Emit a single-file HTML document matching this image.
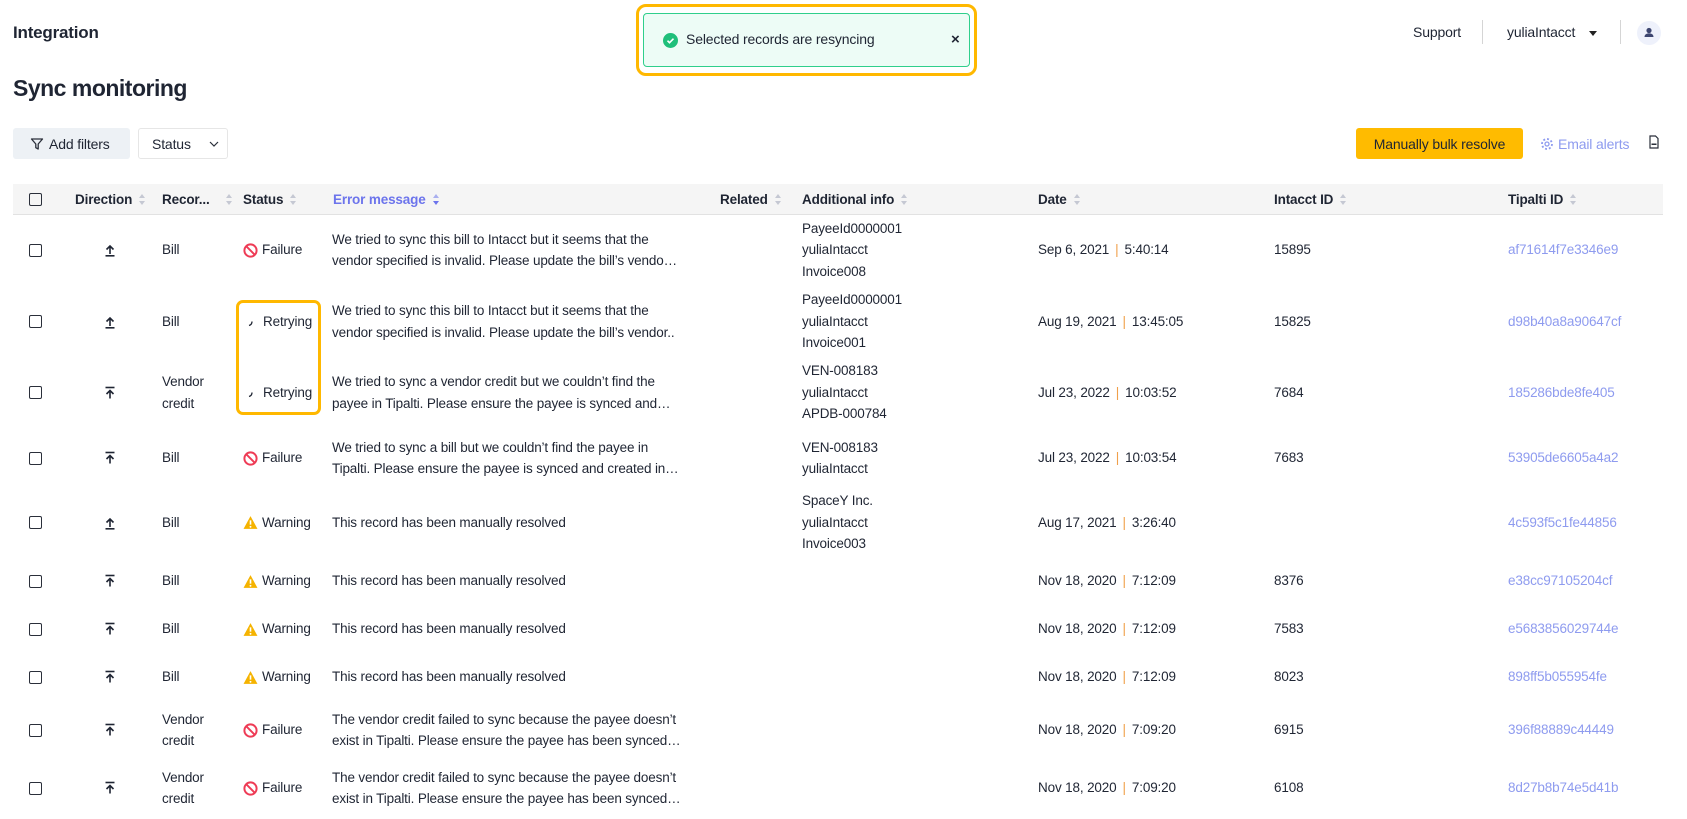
<!DOCTYPE html>
<html><head><meta charset="utf-8">
<style>
*{box-sizing:border-box;margin:0;padding:0}
body{width:1687px;height:819px;overflow:hidden;background:#fff;font-family:"Liberation Sans",sans-serif;color:#1f2533;font-size:13.5px;letter-spacing:-0.15px;position:relative}
.abs{position:absolute}
.h1{left:13px;top:23px;font-size:17px;font-weight:bold;letter-spacing:-0.2px}
.h2{left:13px;top:75px;font-size:23px;font-weight:bold;letter-spacing:-0.5px}
.btn{position:absolute;top:128px;height:31px;display:flex;align-items:center;font-size:14px;border-radius:3px}
.thead{position:absolute;left:13px;top:184px;width:1650px;height:31px;background:#f5f5f5;border-bottom:1.5px solid #e2e2e2}
.th{position:absolute;top:0;height:31px;display:flex;align-items:center;font-weight:bold;font-size:13.5px;white-space:nowrap}
.sort{display:inline-block;margin-left:7px;width:7px;height:11px;position:relative}
.sort:before,.sort:after{content:"";position:absolute;left:0;border-left:3.5px solid transparent;border-right:3.5px solid transparent}
.sort:before{top:0;border-bottom:4px solid #c5c8d3}
.sort:after{bottom:0;border-top:4px solid #c5c8d3}
.sort.act:before{border-bottom-color:#a9afef}.sort.act:after{border-top-color:#6c74ec}
.row{position:absolute;left:0;width:1687px}
.c{position:absolute;top:0;height:100%;display:flex;align-items:center;white-space:nowrap;line-height:21.5px}
.cb{width:13px;height:13px;border:1.6px solid #2a2f3a;border-radius:2px}
.link{color:#8e9bef}
.sep{color:#f0a04b;margin:0 6px}
.st svg{margin-right:5px}
</style></head><body>

<div class="abs h1">Integration</div>
<div class="abs h2">Sync monitoring</div>

<div class="abs" style="left:1413px;top:24px;font-size:14px">Support</div>
<div class="abs" style="left:1482px;top:20px;width:1px;height:24px;background:#d5d5d5"></div>
<div class="abs" style="left:1507px;top:24px;font-size:14px">yuliaIntacct</div>
<div class="abs" style="left:1589px;top:31px;border-left:4px solid transparent;border-right:4px solid transparent;border-top:5px solid #222"></div>
<div class="abs" style="left:1620px;top:20px;width:1px;height:24px;background:#d5d5d5"></div>
<div class="abs" style="left:1637px;top:21px;width:24px;height:24px;border-radius:50%;background:#eef1fb">
<svg width="24" height="24" viewBox="0 0 24 24"><circle cx="12" cy="9.5" r="2.6" fill="#3d4670"/><path d="M7.5 16c0-2.5 2-3.6 4.5-3.6s4.5 1.1 4.5 3.6z" fill="#3d4670"/></svg></div>

<div class="abs" style="left:636px;top:4px;width:341px;height:72px;border:3px solid #ffb800;border-radius:10px"></div>
<div class="abs" style="left:643px;top:13px;width:327px;height:54px;border:1px solid #2fcf8c;background:#edfcf6;border-radius:4px"></div>
<svg class="abs" style="left:663px;top:33px" width="15" height="15" viewBox="0 0 15 15"><circle cx="7.5" cy="7.5" r="7.5" fill="#1fbf7a"/><path d="M4.5 7.7l2 2 4-4" stroke="#fff" stroke-width="1.6" fill="none"/></svg>
<div class="abs" style="left:686px;top:31px;font-size:14px">Selected records are resyncing</div>
<div class="abs" style="left:951px;top:31px;font-size:15px;font-weight:bold">×</div>

<div class="btn" style="left:13px;width:117px;background:#edf1f5;padding-left:17px">
<svg width="14" height="14" viewBox="0 0 14 14" style="margin-right:5px"><path d="M1.5 2h11l-4.3 5v5l-2.4-1.3V7z" fill="none" stroke="#2a2f3a" stroke-width="1.3" stroke-linejoin="round"/></svg>Add filters</div>
<div class="btn" style="left:138px;width:90px;border:1px solid #e6e6e6;padding-left:13px">Status
<svg width="10" height="8" viewBox="0 0 10 8" style="margin-left:18px"><path d="M1 2l4 4 4-4" stroke="#2a2f3a" stroke-width="1.2" fill="none"/></svg></div>
<div class="btn" style="left:1356px;width:167px;background:#ffbb00;justify-content:center">Manually bulk resolve</div>
<div class="btn" style="left:1540px;color:#8e9bef">
<svg width="14" height="14" viewBox="0 0 14 14" style="margin-right:4px"><circle cx="7" cy="7" r="2" fill="none" stroke="#8e9bef" stroke-width="1.3"/><circle cx="7" cy="7" r="5" fill="none" stroke="#8e9bef" stroke-width="1.8" stroke-dasharray="2 1.9"/></svg>Email alerts</div>
<svg class="abs" style="left:1649px;top:135px" width="10" height="14" viewBox="0 0 10 14"><path d="M1 1h5.5l2.5 2.5V13H1z" fill="none" stroke="#2a2f3a" stroke-width="1.2"/><rect x="2.5" y="8.5" width="5" height="1.5" fill="#2a2f3a"/></svg>

<div class="thead">
<div class="th" style="left:16px"><div class="cb"></div></div>
<div class="th" style="left:62px">Direction<span class="sort"></span></div>
<div class="th" style="left:149px">Recor...<span class="sort" style="margin-left:16px"></span></div>
<div class="th" style="left:230px">Status<span class="sort"></span></div>
<div class="th" style="left:320px;color:#6c74ec;font-weight:600">Error message<span class="sort act"></span></div>
<div class="th" style="left:707px">Related<span class="sort"></span></div>
<div class="th" style="left:789px">Additional info<span class="sort"></span></div>
<div class="th" style="left:1025px">Date<span class="sort"></span></div>
<div class="th" style="left:1261px">Intacct ID<span class="sort"></span></div>
<div class="th" style="left:1495px">Tipalti ID<span class="sort"></span></div>
</div>

<div class="abs" style="left:236px;top:300px;width:85px;height:115px;border:3px solid #ffb800;border-radius:7px;z-index:2"></div>

<svg width="0" height="0" style="position:absolute">
<defs>
<symbol id="up" viewBox="0 0 14 14"><path d="M7 11V3M3.5 6.5L7 3l3.5 3.5" stroke="#1f2533" stroke-width="1.6" fill="none"/><path d="M2.5 12.8h9" stroke="#1f2533" stroke-width="1.6"/></symbol>
<symbol id="top" viewBox="0 0 14 14"><path d="M2.5 1.5h9" stroke="#1f2533" stroke-width="1.6"/><path d="M7 12.5V4.5M3.5 8L7 4.5 10.5 8" stroke="#1f2533" stroke-width="1.6" fill="none"/></symbol>
<symbol id="fail" viewBox="0 0 14 14"><circle cx="7" cy="7" r="5.7" fill="none" stroke="#ee3b55" stroke-width="1.8"/><path d="M3 3l8 8" stroke="#ee3b55" stroke-width="1.8"/></symbol>
<symbol id="warn" viewBox="0 0 14 14"><path d="M7 1L13.5 13H0.5z" fill="#f5b300"/><path d="M7 5v4" stroke="#fff" stroke-width="1.5"/><circle cx="7" cy="11" r=".9" fill="#fff"/></symbol>
<symbol id="spin" viewBox="0 0 14 14"><path d="M9 6.5c0 2-1 3.5-3 4" stroke="#1f2533" stroke-width="1.3" fill="none"/></symbol>
</defs></svg>

<div id="rows"></div>
<script>
var R=[
[214,72,'up','Bill','fail','Failure',['We tried to sync this bill to Intacct but it seems that the','vendor specified is invalid. Please update the bill’s vendo…'],['PayeeId0000001','yuliaIntacct','Invoice008'],'Sep 6, 2021','5:40:14','15895','af71614f7e3346e9'],
[286,71,'up','Bill','spin','Retrying',['We tried to sync this bill to Intacct but it seems that the','vendor specified is invalid. Please update the bill’s vendor..'],['PayeeId0000001','yuliaIntacct','Invoice001'],'Aug 19, 2021','13:45:05','15825','d98b40a8a90647cf'],
[357,71,'top','Vendor<br>credit','spin','Retrying',['We tried to sync a vendor credit but we couldn’t find the','payee in Tipalti. Please ensure the payee is synced and…'],['VEN-008183','yuliaIntacct','APDB-000784'],'Jul 23, 2022','10:03:52','7684','185286bde8fe405'],
[428,60,'top','Bill','fail','Failure',['We tried to sync a bill but we couldn’t find the payee in','Tipalti. Please ensure the payee is synced and created in…'],['VEN-008183','yuliaIntacct'],'Jul 23, 2022','10:03:54','7683','53905de6605a4a2'],
[488,69,'up','Bill','warn','Warning',['This record has been manually resolved'],['SpaceY Inc.','yuliaIntacct','Invoice003'],'Aug 17, 2021','3:26:40','','4c593f5c1fe44856'],
[557,48,'top','Bill','warn','Warning',['This record has been manually resolved'],[],'Nov 18, 2020','7:12:09','8376','e38cc97105204cf'],
[605,48,'top','Bill','warn','Warning',['This record has been manually resolved'],[],'Nov 18, 2020','7:12:09','7583','e5683856029744e'],
[653,48,'top','Bill','warn','Warning',['This record has been manually resolved'],[],'Nov 18, 2020','7:12:09','8023','898ff5b055954fe'],
[701,58,'top','Vendor<br>credit','fail','Failure',['The vendor credit failed to sync because the payee doesn’t','exist in Tipalti. Please ensure the payee has been synced…'],[],'Nov 18, 2020','7:09:20','6915','396f88889c44449'],
[759,58,'top','Vendor<br>credit','fail','Failure',['The vendor credit failed to sync because the payee doesn’t','exist in Tipalti. Please ensure the payee has been synced…'],[],'Nov 18, 2020','7:09:20','6108','8d27b8b74e5d41b']
];
var h='';
R.forEach(function(r){
var ico=r[4]=='spin'?'<svg width="14" height="14" style="margin-right:6px"><use href="#spin"/></svg>':'<svg width="15" height="15" style="margin-right:4px"><use href="#'+r[4]+'"/></svg>';
h+='<div class="row" style="top:'+r[0]+'px;height:'+r[1]+'px">'+
'<div class="c" style="left:29px"><div class="cb"></div></div>'+
'<div class="c" style="left:103px"><svg width="14" height="14"><use href="#'+r[2]+'"/></svg></div>'+
'<div class="c" style="left:162px">'+r[3]+'</div>'+
'<div class="c st" style="left:243px">'+ico+r[5]+'</div>'+
'<div class="c" style="left:332px"><div>'+r[6].join('<br>')+'</div></div>'+
'<div class="c" style="left:802px"><div>'+r[7].join('<br>')+'</div></div>'+
'<div class="c" style="left:1038px">'+r[8]+'<span class="sep">|</span>'+r[9]+'</div>'+
'<div class="c" style="left:1274px">'+r[10]+'</div>'+
'<div class="c link" style="left:1508px">'+r[11]+'</div></div>';
});
document.getElementById('rows').innerHTML=h;
</script>
</body></html>
